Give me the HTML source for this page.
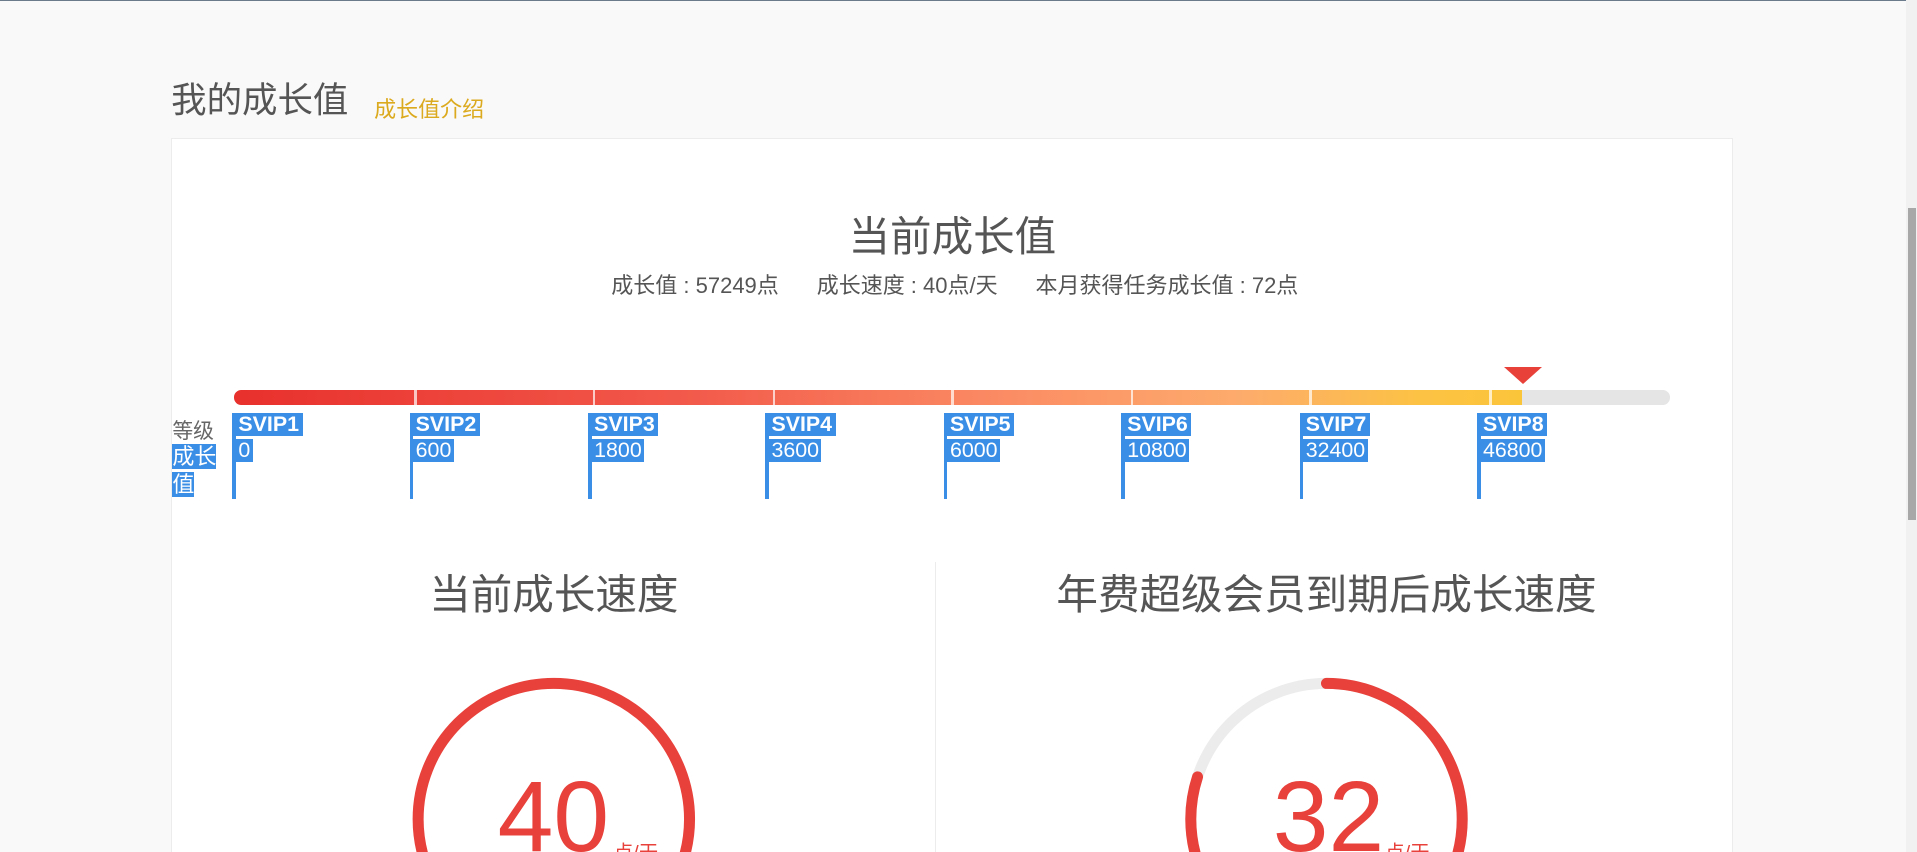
<!DOCTYPE html>
<html><head><meta charset="utf-8">
<style>
html,body{margin:0;padding:0;overflow:hidden;}
body{width:1917px;height:852px;background:#f9f9f9;font-family:"Liberation Sans","Noto Sans CJK SC",sans-serif;}
#w{zoom:1.22258;position:relative;width:1568px;height:697px;overflow:hidden;}
.a{position:absolute;white-space:nowrap;}
.lv{position:absolute;top:338px;width:3px;height:70px;background:#3a8ee6;}
.lt{position:absolute;top:338px;background:#3a8ee6;color:#fff;font-weight:bold;font-size:17.5px;line-height:19px;padding:0 3px 0 5px;}
.ln{position:absolute;top:359px;background:#3a8ee6;color:#fff;font-size:17.5px;line-height:19px;padding:0 2px 0 5px;}
.tick{position:absolute;top:319px;width:2px;height:12px;background:rgba(255,255,255,.7);}
</style></head><body><div id="w">
<div class="a" style="left:0;top:0;width:1568px;height:1px;background:#6b7b8b"></div>
<div class="a" style="left:1559px;top:0;width:9px;height:697px;background:#f1f1f1"></div>
<div class="a" style="left:1561px;top:170px;width:6px;height:255px;background:#a8a8a8"></div>
<div class="a" style="left:140px;top:59px;font-size:29px;color:#555;">我的成长值</div>
<div class="a" style="left:306px;top:75px;font-size:18px;color:#dcaa1e;">成长值介绍</div>
<div class="a" style="left:140px;top:113px;width:1276px;height:600px;background:#fff;border:1px solid #ececec;"></div>
<div class="a" style="left:579px;top:166px;width:400px;text-align:center;font-size:34px;color:#555;">当前成长值</div>
<div class="a" style="left:500px;top:219px;font-size:18px;color:#555;word-spacing:0;">成长值 : 57249点<span style="display:inline-block;width:31px"></span>成长速度 : 40点/天<span style="display:inline-block;width:31px"></span>本月获得任务成长值 : 72点</div>
<div class="a" style="left:191px;top:319px;width:1175px;height:12px;border-radius:6px;background:#e5e5e5;"></div>
<div class="a" style="left:191px;top:319px;width:1054px;height:12px;border-radius:6px 0 0 6px;background:linear-gradient(90deg,#e8302c 0%,#f2594a 35%,#fb8c64 60%,#fdab6c 78%,#fcc244 92%,#fbc53a 100%);"></div>
<div class="tick" style="left:339px"></div><div class="tick" style="left:485px"></div><div class="tick" style="left:632px"></div><div class="tick" style="left:778px"></div><div class="tick" style="left:925px"></div><div class="tick" style="left:1071px"></div><div class="tick" style="left:1218px"></div>
<div class="a" style="left:1230px;top:300px;width:0;height:0;border-left:16px solid transparent;border-right:16px solid transparent;border-top:14px solid #e8413a;"></div>
<div class="a" style="left:141px;top:339px;font-size:17px;color:#666;">等级</div>
<div class="a" style="left:141px;top:362px;width:42px;font-size:18px;line-height:23px;color:#fff;white-space:normal;"><span style="background:#3a8ee6">成长</span><br><span style="background:#3a8ee6">值</span></div>
<div class="lv" style="left:190px"></div><div class="lt" style="left:190px">SVIP1</div><div class="ln" style="left:190px">0</div>
<div class="lv" style="left:335px"></div><div class="lt" style="left:335px">SVIP2</div><div class="ln" style="left:335px">600</div>
<div class="lv" style="left:481px"></div><div class="lt" style="left:481px">SVIP3</div><div class="ln" style="left:481px">1800</div>
<div class="lv" style="left:626px"></div><div class="lt" style="left:626px">SVIP4</div><div class="ln" style="left:626px">3600</div>
<div class="lv" style="left:772px"></div><div class="lt" style="left:772px">SVIP5</div><div class="ln" style="left:772px">6000</div>
<div class="lv" style="left:917px"></div><div class="lt" style="left:917px">SVIP6</div><div class="ln" style="left:917px">10800</div>
<div class="lv" style="left:1063px"></div><div class="lt" style="left:1063px">SVIP7</div><div class="ln" style="left:1063px">32400</div>
<div class="lv" style="left:1208px"></div><div class="lt" style="left:1208px">SVIP8</div><div class="ln" style="left:1208px">46800</div>
<div class="a" style="left:765px;top:460px;width:1px;height:240px;background:#ececec"></div>
<div class="a" style="left:253px;top:459px;width:400px;text-align:center;font-size:34px;color:#555;">当前成长速度</div>
<div class="a" style="left:835px;top:459px;width:500px;text-align:center;font-size:34px;color:#555;">年费超级会员到期后成长速度</div>
<svg class="a" style="left:0;top:0" width="1568" height="697">
<circle cx="453" cy="670" r="111" fill="none" stroke="#e8403a" stroke-width="9"/>
<circle cx="1085" cy="670" r="111" fill="none" stroke="#ececec" stroke-width="9"/>
<circle cx="1085" cy="670" r="111" fill="none" stroke="#e8403a" stroke-width="9" stroke-linecap="round" stroke-dasharray="558 200" transform="rotate(-90 1085 670)"/>
</svg>
<div class="a" style="left:407px;top:622px;font-size:82px;color:#e8403a;font-weight:300;">40</div>
<div class="a" style="left:502px;top:684px;font-size:16px;color:#e8403a;">点/天</div>
<div class="a" style="left:1041px;top:622px;font-size:82px;color:#e8403a;font-weight:300;">32</div>
<div class="a" style="left:1133px;top:684px;font-size:16px;color:#e8403a;">点/天</div>
</div></body></html>
